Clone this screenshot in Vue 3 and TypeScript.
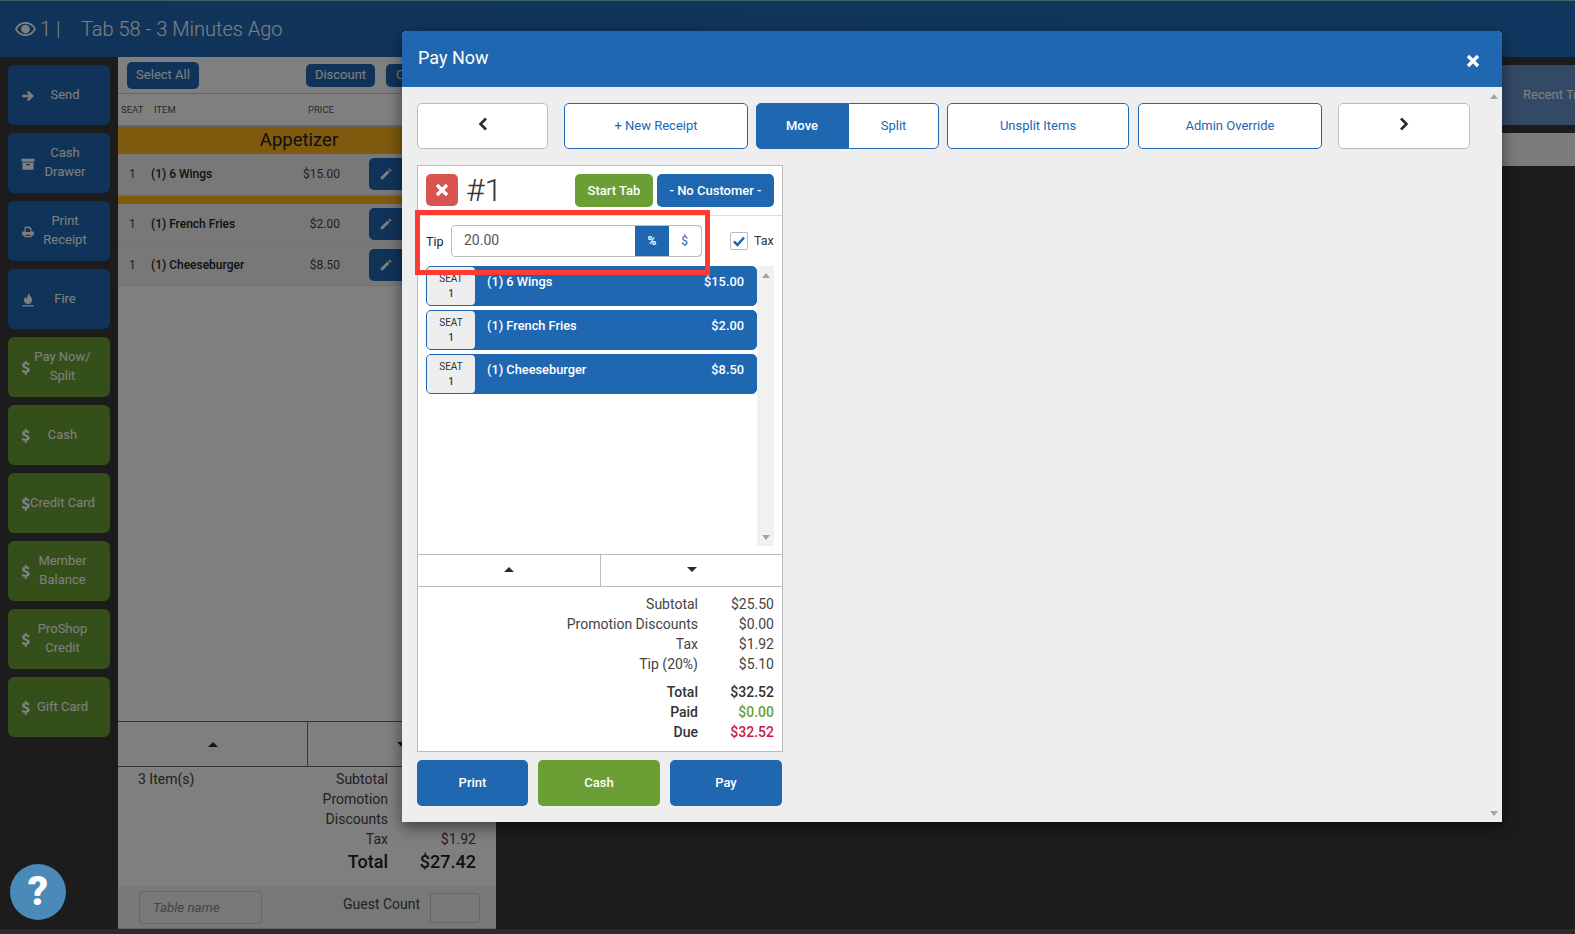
<script setup lang="ts">
interface SideButton {
  lines: string[]
  icon: string
  green?: boolean
}

const arrowPath = 'M13 3l9 9-9 9-3-3 4-4H2v-4h12l-4-4z'
const dollarPath =
  'M11 1h3v2.300c1.900.2 3.400.8 4.600 1.700l-1.700 3c-1.200-.9-2.600-1.400-4-1.400-1.400 0-2.200.5-2.200 1.300 0 .9 1 1.300 3 2 2.900 1 4.900 2.200 4.900 4.900 0 2.400-1.600 4.200-4.600 4.700V23h-3v-3.400c-2.100-.2-3.900-1-5.100-2.100l1.800-2.900c1.300 1 2.800 1.700 4.200 1.700 1.600 0 2.500-.6 2.500-1.500 0-1-1-1.500-3.100-2.200-2.800-1-4.700-2.200-4.700-4.800 0-2.300 1.600-4 4.400-4.400V1z'

const sideButtons: SideButton[] = [
  { lines: ['Send'], icon: 'send' },
  { lines: ['Cash', 'Drawer'], icon: 'drawer' },
  { lines: ['Print', 'Receipt'], icon: 'print' },
  { lines: ['Fire'], icon: 'fire' },
  { lines: ['Pay Now/', 'Split'], icon: 'dollar', green: true },
  { lines: ['Cash'], icon: 'dollar', green: true },
  { lines: ['Credit Card'], icon: 'dollar', green: true },
  { lines: ['Member', 'Balance'], icon: 'dollar', green: true },
  { lines: ['ProShop', 'Credit'], icon: 'dollar', green: true },
  { lines: ['Gift Card'], icon: 'dollar', green: true }
]

const receiptItems = [
  { name: '(1) 6 Wings', price: '$15.00' },
  { name: '(1) French Fries', price: '$2.00' },
  { name: '(1) Cheeseburger', price: '$8.50' }
]

const subTotals = [
  { label: 'Subtotal', value: '$25.50' },
  { label: 'Promotion Discounts', value: '$0.00' },
  { label: 'Tax', value: '$1.92' },
  { label: 'Tip (20%)', value: '$5.10' }
]
</script>

<template>
  <div class="page">
    <header class="topbar">
      <svg class="eye" viewBox="0 0 24 16" width="21" height="14">
        <path
          fill="currentColor"
          fill-rule="evenodd"
          d="M12 0c5 0 9.500 3 12 8-2.500 5-7 8-12 8S2.500 13 0 8c2.500-5 7-8 12-8zm0 2C8 2 4.300 4.200 2.200 8 4.300 11.800 8 14 12 14s7.700-2.200 9.800-6C19.700 4.200 16 2 12 2zm0 1a5 5 0 1 1 0 10 5 5 0 0 1 0-10z"
        />
      </svg>
      <span class="topbar__count">1 |</span>
      <span class="topbar__title">Tab 58 - 3 Minutes Ago</span>
    </header>

    <div class="main">
      <nav class="sidebar">
        <button
          v-for="item in sideButtons"
          :key="item.lines.join(' ')"
          class="side-btn"
          :class="{ 'side-btn--green': item.green }"
          type="button"
        >
          <svg v-if="item.icon === 'dollar'" class="side-btn__icon" viewBox="5 0 14 24" width="9" height="16">
            <path fill="currentColor" :d="dollarPath" />
          </svg>
          <svg v-else class="side-btn__icon" viewBox="0 0 24 24" width="14" height="14">
            <path v-if="item.icon === 'send'" fill="currentColor" :d="arrowPath" />
            <path
              v-else-if="item.icon === 'drawer'"
              fill="currentColor"
              d="M1 3h22v5H1zM2.500 9.500h19V22h-19zM9 12v2h6v-2z"
              fill-rule="evenodd"
            />
            <path
              v-else-if="item.icon === 'print'"
              fill="currentColor"
              fill-rule="evenodd"
              d="M6 3h9l3 3v5h2.500c1 0 1.500.6 1.500 1.500V18h-4v3H6v-3H2v-5.500C2 11.600 2.500 11 3.500 11H6zm2 2v7h8V7h-2.500V5zM8 16.500V19h8v-2.500z"
            />
            <path
              v-else
              fill="currentColor"
              d="M13 0c1 4 6 7 6 12 0 4-3 7-6.500 7S5 16 5 12.500c0-2.500 1.500-4.500 3.500-6 .2 2 .8 3 1.500 3.500C11 7 12 3.500 13 0zM2 21h20v2H2z"
            />
          </svg>
          <span class="side-btn__text">
            <span v-for="line in item.lines" :key="line">{{ line }}</span>
          </span>
        </button>
      </nav>

      <section class="order">
        <div class="order__tools">
          <button class="tool-btn tool-btn--select" type="button">Select All</button>
          <button class="tool-btn tool-btn--discount" type="button">Discount</button>
          <button class="tool-btn tool-btn--more" type="button">Comp</button>
        </div>
        <div class="order__head">
          <span class="head-seat">SEAT</span>
          <span class="head-item">ITEM</span>
          <span class="head-price">PRICE</span>
        </div>
        <div class="category">Appetizer</div>
        <div class="order-row">
          <span class="order-row__seat">1</span>
          <span class="order-row__name">(1) 6 Wings</span>
          <span class="order-row__price">$15.00</span>
          <span class="pencil">
            <svg viewBox="0 0 24 24" width="14" height="14">
              <path fill="currentColor" d="M3 17.500 14.500 6l3.500 3.500L6.500 21H3zM16 4.500 18 2.500l3.500 3.500-2 2z" />
            </svg>
          </span>
        </div>
        <div class="category-bar"></div>
        <div class="order-row">
          <span class="order-row__seat">1</span>
          <span class="order-row__name">(1) French Fries</span>
          <span class="order-row__price">$2.00</span>
          <span class="pencil">
            <svg viewBox="0 0 24 24" width="14" height="14">
              <path fill="currentColor" d="M3 17.500 14.500 6l3.500 3.500L6.500 21H3zM16 4.500 18 2.500l3.500 3.500-2 2z" />
            </svg>
          </span>
        </div>
        <div class="order-row">
          <span class="order-row__seat">1</span>
          <span class="order-row__name">(1) Cheeseburger</span>
          <span class="order-row__price">$8.50</span>
          <span class="pencil">
            <svg viewBox="0 0 24 24" width="14" height="14">
              <path fill="currentColor" d="M3 17.500 14.500 6l3.500 3.500L6.500 21H3zM16 4.500 18 2.500l3.500 3.500-2 2z" />
            </svg>
          </span>
        </div>
        <div class="order__spacer"></div>
        <div class="order__arrows">
          <span class="order__arrow"><i class="caret-up"></i></span>
          <span class="order__arrow"><i class="caret-down"></i></span>
        </div>
        <div class="order__summary">
          <span class="order__count">3 Item(s)</span>
          <div class="order__totals">
            <div class="order__total-row"><span>Subtotal</span><b>$25.50</b></div>
            <div class="order__total-row"><span>Promotion<br />Discounts</span><b>$0.00</b></div>
            <div class="order__total-row"><span>Tax</span><b>$1.92</b></div>
            <div class="order__total-row order__total-row--big"><span>Total</span><b>$27.42</b></div>
          </div>
        </div>
        <div class="order__foot">
          <input class="table-name" placeholder="Table name" />
          <span class="guest-label">Guest Count</span>
          <input class="guest-count" />
        </div>
      </section>

      <div class="rest">
        <button class="recent-btn" type="button">Recent Transactions</button>
        <div class="rest__strip"></div>
      </div>
    </div>
    <div class="page-foot"></div>

    <button class="help" type="button">?</button>

    <div class="backdrop"></div>

    <div class="modal">
      <div class="modal__header">
        <span class="modal__title">Pay Now</span>
        <svg class="modal__close" viewBox="0 0 14 14" width="14" height="14">
          <path fill="none" stroke="#fff" stroke-width="3.400" d="M2 2l10 10M12 2 2 12" />
        </svg>
      </div>
      <div class="modal__body">
        <div class="actions">
          <button class="act act--nav act--prev" type="button">
            <svg viewBox="0 0 10 14" width="10" height="14">
              <path fill="none" stroke="#222b38" stroke-width="2.600" d="M8 1.500 2.500 7 8 12.500" />
            </svg>
          </button>
          <button class="act act--new" type="button">+ New Receipt</button>
          <div class="toggle">
            <button class="toggle__on" type="button">Move</button>
            <button class="toggle__off" type="button">Split</button>
          </div>
          <button class="act act--unsplit" type="button">Unsplit Items</button>
          <button class="act act--admin" type="button">Admin Override</button>
          <button class="act act--nav act--next" type="button">
            <svg viewBox="0 0 10 14" width="10" height="14">
              <path fill="none" stroke="#222b38" stroke-width="2.600" d="M2 1.500 7.500 7 2 12.500" />
            </svg>
          </button>
        </div>

        <div class="receipt">
          <div class="receipt__head">
            <button class="receipt__remove" type="button">
              <svg viewBox="0 0 14 14" width="14" height="14">
                <path fill="none" stroke="#fff" stroke-width="3.400" d="M2 2l10 10M12 2 2 12" />
              </svg>
            </button>
            <span class="receipt__num">#1</span>
            <button class="receipt__tab" type="button">Start Tab</button>
            <button class="receipt__customer" type="button">- No Customer -</button>
          </div>

          <div class="tip-row">
            <span class="tip-row__label">Tip</span>
            <div class="tip-input">
              <span class="tip-input__value">20.00</span>
              <span class="tip-input__pct">%</span>
              <span class="tip-input__usd">$</span>
            </div>
            <span class="tax-check">
              <svg viewBox="0 0 18 18" width="14" height="14">
                <path fill="none" stroke="#2067b2" stroke-width="3.200" d="M2.500 9.500 7 14l8.500-9.500" />
              </svg>
            </span>
            <span class="tax-label">Tax</span>
            <div class="highlight"></div>
          </div>

          <div class="items">
            <div class="items__list">
              <div v-for="item in receiptItems" :key="item.name" class="item">
                <span class="item__seat"><span>SEAT</span><span class="item__seat-num">1</span></span>
                <span class="item__name">{{ item.name }}</span>
                <span class="item__price">{{ item.price }}</span>
              </div>
            </div>
            <div class="items__scroll">
              <i class="scroll-up"></i>
              <i class="scroll-down"></i>
            </div>
          </div>

          <div class="receipt__arrows">
            <span class="receipt__arrow"><i class="caret-up"></i></span>
            <span class="receipt__arrow"><i class="caret-down"></i></span>
          </div>

          <div class="totals">
            <div v-for="row in subTotals" :key="row.label" class="totals__row">
              <span>{{ row.label }}</span>
              <span class="totals__value">{{ row.value }}</span>
            </div>
            <div class="totals__row totals__row--strong totals__row--first">
              <span>Total</span>
              <span class="totals__value">$32.52</span>
            </div>
            <div class="totals__row totals__row--strong">
              <span>Paid</span>
              <span class="totals__value totals__value--paid">$0.00</span>
            </div>
            <div class="totals__row totals__row--strong">
              <span>Due</span>
              <span class="totals__value totals__value--due">$32.52</span>
            </div>
          </div>
        </div>

        <div class="pay-row">
          <button class="pay-btn pay-btn--print" type="button">Print</button>
          <button class="pay-btn pay-btn--cash" type="button">Cash</button>
          <button class="pay-btn pay-btn--pay" type="button">Pay</button>
        </div>

        <div class="modal__scroll">
          <i class="scroll-up"></i>
          <i class="scroll-down"></i>
        </div>
      </div>
    </div>
  </div>
</template>

<style>
html,
body {
  margin: 0;
  background: #383838;
}
</style>

<style scoped>
.page {
  position: relative;
  width: 1575px;
  height: 934px;
  overflow: hidden;
  background: #383838;
  font-family: Roboto, "Liberation Sans", sans-serif;
  color: #333;
}

button {
  font-family: inherit;
  cursor: pointer;
}

.topbar {
  height: 56px;
  border-top: 1px solid #78d0c8;
  display: flex;
  align-items: center;
  padding-left: 15px;
  background: linear-gradient(90deg, #2067b2, #2070bf);
  color: #fff;
  font-weight: 300;
  font-size: 20px;
}

.eye {
  margin-right: 4px;
}

.topbar__count {
  width: 41px;
}

.main {
  display: flex;
  height: 872px;
}

.page-foot {
  height: 5px;
  background: #555;
}

.sidebar {
  width: 102px;
  padding: 8px 8px 0;
  display: flex;
  flex-direction: column;
  gap: 8px;
  flex: none;
}

.side-btn {
  height: 60px;
  border: 0;
  border-radius: 6px;
  background: #2067b2;
  color: #fff;
  font-size: 13px;
  display: flex;
  align-items: center;
  padding: 0 15px 0 13px;
  box-sizing: border-box;
  width: 102px;
}

.side-btn--green {
  background: #6b9e35;
}

.side-btn__icon {
  flex: none;
  margin-top: 2px;
}

.side-btn__text {
  flex: 1;
  display: flex;
  flex-direction: column;
  align-items: center;
  line-height: 19px;
  white-space: nowrap;
  margin-top: -2px;
}

.order {
  width: 378px;
  background: #fff;
  display: flex;
  flex-direction: column;
  height: 872px;
  flex: none;
  color: #444;
}

.order__tools {
  height: 36px;
  display: flex;
  align-items: center;
  padding-left: 9px;
  border-bottom: 1px solid #ccc;
  flex: none;
}

.tool-btn {
  border: 0;
  background: #2067b2;
  color: #fff;
  font-size: 13px;
  border-radius: 5px;
  padding: 0 0 2px;
}

.tool-btn--select {
  width: 72px;
  height: 27px;
}

.tool-btn--discount {
  width: 69px;
  height: 23px;
  margin-left: 107px;
}

.tool-btn--more {
  width: 69px;
  height: 23px;
  margin-left: 11px;
  text-align: left;
  padding-left: 10px;
}

.order__head {
  height: 31px;
  display: flex;
  align-items: center;
  font-size: 9.500px;
  color: #555;
  border-bottom: 2px solid #ccc;
  flex: none;
}

.head-seat {
  margin-left: 3px;
  width: 33px;
}

.head-item {
  width: 154px;
}

.category {
  height: 27px;
  background: #ffb51c;
  font-size: 18.500px;
  line-height: 27px;
  text-align: center;
  color: #222;
  padding-right: 16px;
  flex: none;
}

.category-bar {
  height: 8px;
  background: #ffb51c;
  border-top: 1px solid #ddd;
  flex: none;
}

.order-row {
  height: 40px;
  display: flex;
  align-items: center;
  background: #f0f0f0;
  font-size: 12px;
  font-weight: 500;
  border-bottom: 1px solid #e4e4e4;
  flex: none;
}

.order-row__seat {
  width: 33px;
  padding-left: 11px;
  box-sizing: border-box;
  font-weight: 400;
}

.order-row__name {
  flex: 1;
  color: #222;
}

.order-row__price {
  font-weight: 400;
  margin-right: 29px;
}

.pencil {
  width: 64px;
  height: 32px;
  border-radius: 5px;
  background: #2067b2;
  color: #fff;
  display: flex;
  align-items: center;
  padding-left: 10px;
  box-sizing: border-box;
  flex: none;
  margin-right: 63px;
}

.order__spacer {
  flex: 1;
}

.order__arrows {
  height: 44px;
  display: grid;
  grid-template-columns: 189px 1fr;
  border-top: 1px solid #666;
  border-bottom: 1px solid #666;
  flex: none;
}

.order__arrow {
  display: flex;
  align-items: center;
  justify-content: center;
}

.order__arrow + .order__arrow {
  border-left: 1px solid #666;
}

.order__summary {
  height: 120px;
  display: flex;
  font-size: 14px;
  padding: 2px 20px 0 20px;
  box-sizing: border-box;
  color: #444;
  flex: none;
}

.order__count {
  flex: 1;
  line-height: 20px;
}

.order__totals {
  width: 200px;
}

.order__total-row {
  display: flex;
  justify-content: space-between;
  line-height: 20px;
  text-align: right;
}

.order__total-row span {
  width: 111px;
  margin-left: auto;
}

.order__total-row b {
  width: 88px;
  font-weight: 400;
}

.order__total-row--big {
  font-size: 18px;
  font-weight: 500;
  line-height: 26px;
  color: #222;
}

.order__total-row--big b {
  font-weight: 500;
}

.order__foot {
  height: 41px;
  background: #f0f0f0;
  border-bottom: 1px solid #ccc;
  display: flex;
  align-items: center;
  font-size: 14px;
  flex: none;
}

.table-name {
  width: 123px;
  height: 33px;
  margin-left: 21px;
  box-sizing: border-box;
  border: 1px solid #ccc;
  border-radius: 4px;
  background: #f0f0f0;
  padding: 0 13px;
  font-family: inherit;
  font-size: 13.300px;
  font-style: italic;
}

.table-name::placeholder {
  color: #888;
}

.guest-label {
  margin-left: 81px;
  width: 87px;
  margin-top: -7px;
}

.guest-count {
  width: 50px;
  height: 30px;
  box-sizing: border-box;
  border: 1px solid #ccc;
  border-radius: 3px;
  background: #f0f0f0;
}

.rest {
  flex: 1;
  display: flex;
  flex-direction: column;
  align-items: flex-end;
  padding-top: 8px;
  gap: 8px;
  overflow: hidden;
}

.recent-btn {
  width: 250px;
  height: 60px;
  border: 0;
  border-radius: 6px 0 0 6px;
  background: #6794cc;
  color: #fff;
  font-size: 13px;
  text-align: left;
  padding: 0 0 2px 198px;
  white-space: nowrap;
  flex: none;
  overflow: hidden;
}

.rest__strip {
  width: 100%;
  height: 33px;
  background: #f8f8f8;
  flex: none;
}

.help {
  position: absolute;
  left: 10px;
  top: 864px;
  width: 56px;
  height: 56px;
  border: 0;
  border-radius: 50%;
  background: #4a8ab9;
  color: #fff;
  font-size: 40px;
  font-weight: 900;
  line-height: 56px;
  padding: 0;
  z-index: 2;
}

.backdrop {
  position: absolute;
  inset: 0;
  background: rgba(0, 0, 0, 0.5);
  z-index: 1;
}

.modal {
  position: absolute;
  left: 402px;
  top: 31px;
  width: 1100px;
  height: 791px;
  z-index: 3;
  background: #eee;
  border-radius: 5px 5px 0 0;
  box-shadow: 0 5px 15px rgba(0, 0, 0, 0.5);
  display: flex;
  flex-direction: column;
}

.modal__header {
  height: 56px;
  background: #2067b2;
  color: #fff;
  border-radius: 5px 5px 0 0;
  display: flex;
  align-items: center;
  justify-content: space-between;
  padding: 0 22px 0 16px;
  flex: none;
}

.modal__title {
  font-size: 18px;
  margin-top: -4px;
}

.modal__close {
  margin-top: 4px;
}

.modal__body {
  flex: 1;
  padding: 16px 15px 0;
  position: relative;
}

.actions {
  display: flex;
  height: 46px;
}

.act {
  height: 46px;
  border: 1px solid #2067b2;
  border-radius: 5px;
  background: #fff;
  color: #2067b2;
  font-size: 13px;
  padding: 0 0 1px;
  flex: none;
}

.act--nav {
  border-color: #bbb;
  width: 132px;
}

.act--prev {
  width: 131px;
}

.act--new {
  width: 184px;
  margin-left: 16px;
}

.toggle {
  display: flex;
  width: 183px;
  height: 46px;
  margin-left: 8px;
  flex: none;
}

.toggle button {
  height: 46px;
  font-size: 13px;
  padding: 0 0 1px;
  border: 1px solid #2067b2;
}

.toggle__on {
  width: 92px;
  background: #2067b2;
  color: #fff;
  border-radius: 5px 0 0 5px;
  font-weight: 500;
}

.toggle__off {
  width: 91px;
  background: #fff;
  color: #2067b2;
  border-radius: 0 5px 5px 0;
}

.act--unsplit {
  width: 182px;
  margin-left: 8px;
}

.act--admin {
  width: 184px;
  margin-left: 9px;
}

.act--next {
  margin-left: 16px;
}

.receipt {
  width: 366px;
  height: 587px;
  margin-top: 16px;
  box-sizing: border-box;
  border: 1px solid #bbb;
  background: #fff;
  display: flex;
  flex-direction: column;
}

.receipt__head {
  height: 50px;
  display: flex;
  align-items: flex-start;
  padding: 8px 8px 0;
  border-bottom: 1px solid #ddd;
  flex: none;
  box-sizing: border-box;
}

.receipt__remove {
  width: 32px;
  height: 32px;
  border: 0;
  border-radius: 5px;
  background: #d9534f;
  display: flex;
  align-items: center;
  justify-content: center;
  padding: 0;
}

.receipt__num {
  font-size: 32px;
  font-weight: 300;
  line-height: 32px;
  margin-left: 8px;
  color: #333;
  flex: 1;
}

.receipt__tab,
.receipt__customer {
  height: 33px;
  border: 0;
  border-radius: 5px;
  color: #fff;
  font-size: 13px;
  font-weight: 500;
  padding: 0 0 1px;
}

.receipt__tab {
  width: 78px;
  background: #6b9e35;
}

.receipt__customer {
  width: 117px;
  margin-left: 4px;
  background: #2067b2;
}

.tip-row {
  height: 50px;
  display: flex;
  align-items: center;
  padding: 0 8px;
  box-sizing: border-box;
  font-size: 12.500px;
  position: relative;
  flex: none;
}

.tip-row__label {
  width: 25px;
  color: #222;
  flex: none;
}

.tip-input {
  width: 251px;
  height: 32px;
  box-sizing: border-box;
  display: flex;
  border: 1px solid #bbb;
  border-radius: 4px;
  overflow: hidden;
  flex: none;
}

.tip-input__value {
  flex: 1;
  font-size: 14px;
  padding-left: 12px;
  line-height: 29px;
  color: #555;
}

.tip-input__pct,
.tip-input__usd {
  width: 33px;
  display: flex;
  align-items: center;
  justify-content: center;
  font-size: 12px;
}

.tip-input__pct {
  width: 34px;
  background: #2067b2;
  color: #fff;
  font-weight: 700;
}

.tip-input__usd {
  color: #2067b2;
  border: 1px solid #2067b2;
  border-left: 0;
  border-radius: 0 4px 4px 0;
  margin: -1px;
}

.tax-check {
  width: 18px;
  height: 18px;
  box-sizing: border-box;
  border: 1px solid #bbb;
  border-radius: 2px;
  margin-left: 28px;
  display: flex;
  align-items: center;
  justify-content: center;
  flex: none;
}

.tax-label {
  margin: -1px 0 0 6px;
  flex: none;
}

.highlight {
  position: absolute;
  left: -3px;
  top: -6px;
  width: 295px;
  height: 65px;
  box-sizing: border-box;
  border: 5px solid #ff3a33;
  z-index: 2;
}

.items {
  height: 280px;
  display: flex;
  padding: 0 8px;
  flex: none;
}

.items__list {
  width: 331px;
  display: flex;
  flex-direction: column;
  gap: 4px;
  flex: none;
}

.item {
  height: 40px;
  display: flex;
  background: #2067b2;
  color: #fff;
  border-radius: 5px;
  font-size: 12.800px;
  font-weight: 500;
  box-sizing: border-box;
  border: 1px solid #2067b2;
}

.item__seat {
  width: 48px;
  background: #eee;
  color: #333;
  border-radius: 4px;
  display: flex;
  flex-direction: column;
  align-items: center;
  justify-content: center;
  font-size: 10px;
  font-weight: 400;
  line-height: 15px;
  flex: none;
  box-sizing: border-box;
}

.item__seat-num {
  font-weight: 500;
}

.item__name {
  flex: 1;
  padding: 7px 0 0 12px;
}

.item__price {
  padding: 7px 12px 0 0;
}

.items__scroll {
  flex: 1;
  background: #f1f1f1;
  position: relative;
}

.scroll-up,
.scroll-down {
  position: absolute;
  right: 4px;
  width: 0;
  height: 0;
  border-left: 4px solid transparent;
  border-right: 4px solid transparent;
}

.scroll-up {
  top: 7px;
  border-bottom: 5px solid #a3a3a3;
}

.scroll-down {
  bottom: 6px;
  border-top: 5px solid #a3a3a3;
}

.receipt__arrows {
  height: 31px;
  margin-top: 8px;
  display: grid;
  grid-template-columns: 182px 1fr;
  border-top: 1px solid #bbb;
  border-bottom: 1px solid #bbb;
  flex: none;
}

.receipt__arrow {
  display: flex;
  align-items: center;
  justify-content: center;
  padding-bottom: 3px;
}

.receipt__arrow + .receipt__arrow {
  border-left: 1px solid #bbb;
}

.caret-up,
.caret-down {
  width: 0;
  height: 0;
  border-left: 5px solid transparent;
  border-right: 5px solid transparent;
}

.caret-up {
  border-bottom: 5px solid #222b38;
}

.caret-down {
  border-top: 5px solid #222b38;
}

.totals {
  padding: 7px 8px 0 0;
  font-size: 14px;
  color: #444;
}

.totals__row {
  height: 20px;
  line-height: 20px;
  display: flex;
  justify-content: flex-end;
}

.totals__value {
  width: 76px;
  text-align: right;
}

.totals__row--strong {
  font-weight: 500;
  color: #333;
}

.totals__row--first {
  margin-top: 8px;
}

.totals__value--paid {
  color: #6b9e35;
}

.totals__value--due {
  color: #c9193f;
}

.pay-row {
  display: flex;
  width: 366px;
  margin-top: 8px;
  gap: 10px;
}

.pay-btn {
  height: 46px;
  border: 0;
  border-radius: 5px;
  color: #fff;
  font-size: 13px;
  font-weight: 500;
  padding: 0 0 1px;
  flex: none;
}

.pay-btn--print {
  width: 111px;
  background: #2067b2;
}

.pay-btn--cash {
  width: 122px;
  background: #6b9e35;
}

.pay-btn--pay {
  width: 112px;
  background: #2067b2;
}

.modal__scroll {
  position: absolute;
  top: 0;
  bottom: 0;
  right: 0;
  width: 17px;
}
</style>
